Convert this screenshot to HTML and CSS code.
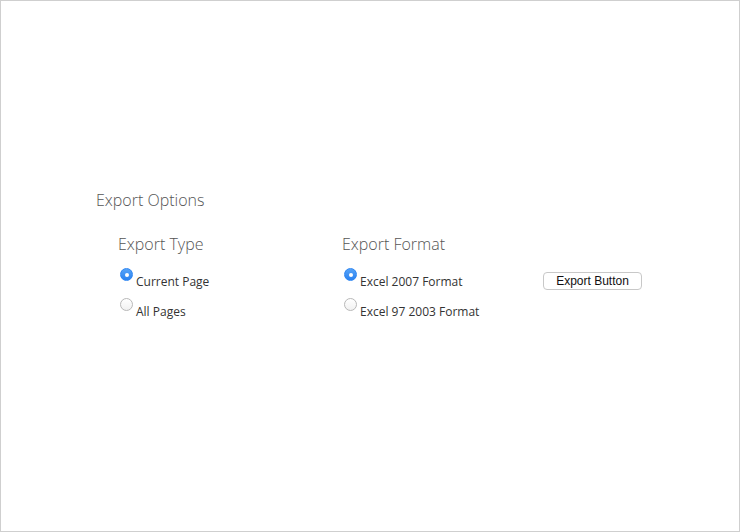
FILE: index.html
```html
<!DOCTYPE html>
<html>
<head>
<meta charset="utf-8">
<link rel="stylesheet" href="styles.css">
</head>
<body>
<div class="frame">
  <div class="panel">
    <div class="title">Export Options</div>
    <div class="columns">
      <div class="col col-type">
        <div class="heading">Export Type</div>
        <div class="option"><span class="radio checked"></span><span class="label">Current Page</span></div>
        <div class="option"><span class="radio"></span><span class="label">All Pages</span></div>
      </div>
      <div class="col col-format">
        <div class="heading">Export Format</div>
        <div class="option"><span class="radio checked"></span><span class="label">Excel 2007 Format</span></div>
        <div class="option"><span class="radio"></span><span class="label">Excel 97 2003 Format</span></div>
      </div>
      <div class="col col-action">
        <button class="btn">Export Button</button>
      </div>
    </div>
  </div>
</div>
</body>
</html>
```
FILE: styles.css
```css
html, body {
  margin: 0;
  padding: 0;
  background: #fff;
}
.frame {
  box-sizing: border-box;
  width: 740px;
  height: 532px;
  border: 1px solid #cfcfcf;
  font-family: "Open Sans", "Noto Sans", sans-serif;
  color: #444;
}
.panel {
  padding: 188px 0 0 95px;
}
.title {
  font-size: 16px;
  font-weight: 300;
  line-height: 22px;
  color: #555;
}
.columns {
  display: flex;
  padding-left: 22px;
  margin-top: 22px;
}
.col-type {
  width: 224px;
}
.col-format {
  width: 201px;
}
.heading {
  font-size: 16px;
  font-weight: 300;
  line-height: 22px;
  color: #555;
  margin-bottom: 13px;
}
.option {
  display: flex;
  align-items: flex-start;
  height: 30px;
}
.radio {
  box-sizing: border-box;
  width: 13px;
  height: 13px;
  border-radius: 50%;
  border: 1px solid #b8b8b8;
  background: linear-gradient(#fff, #f1f1f1);
  margin: 0 3px 0 2px;
  flex: none;
  position: relative;
}
.radio.checked {
  border-color: #2e86f2;
  background: linear-gradient(#56a3f8, #2a82f0);
}
.radio.checked::after {
  content: "";
  position: absolute;
  left: 3.5px;
  top: 3.5px;
  width: 4px;
  height: 4px;
  border-radius: 50%;
  background: #fff;
}
.label {
  font-size: 12px;
  line-height: 16px;
  margin-top: 6px;
  color: #333;
}
.col-action {
  padding-top: 35px;
}
.btn {
  box-sizing: border-box;
  width: 99px;
  height: 18px;
  padding: 0;
  border: 1px solid #c8c8c8;
  border-radius: 4px;
  background: #fff;
  font-family: "Liberation Sans", Arial, sans-serif;
  font-size: 12px;
  color: #111;
  line-height: 16px;
}
```
